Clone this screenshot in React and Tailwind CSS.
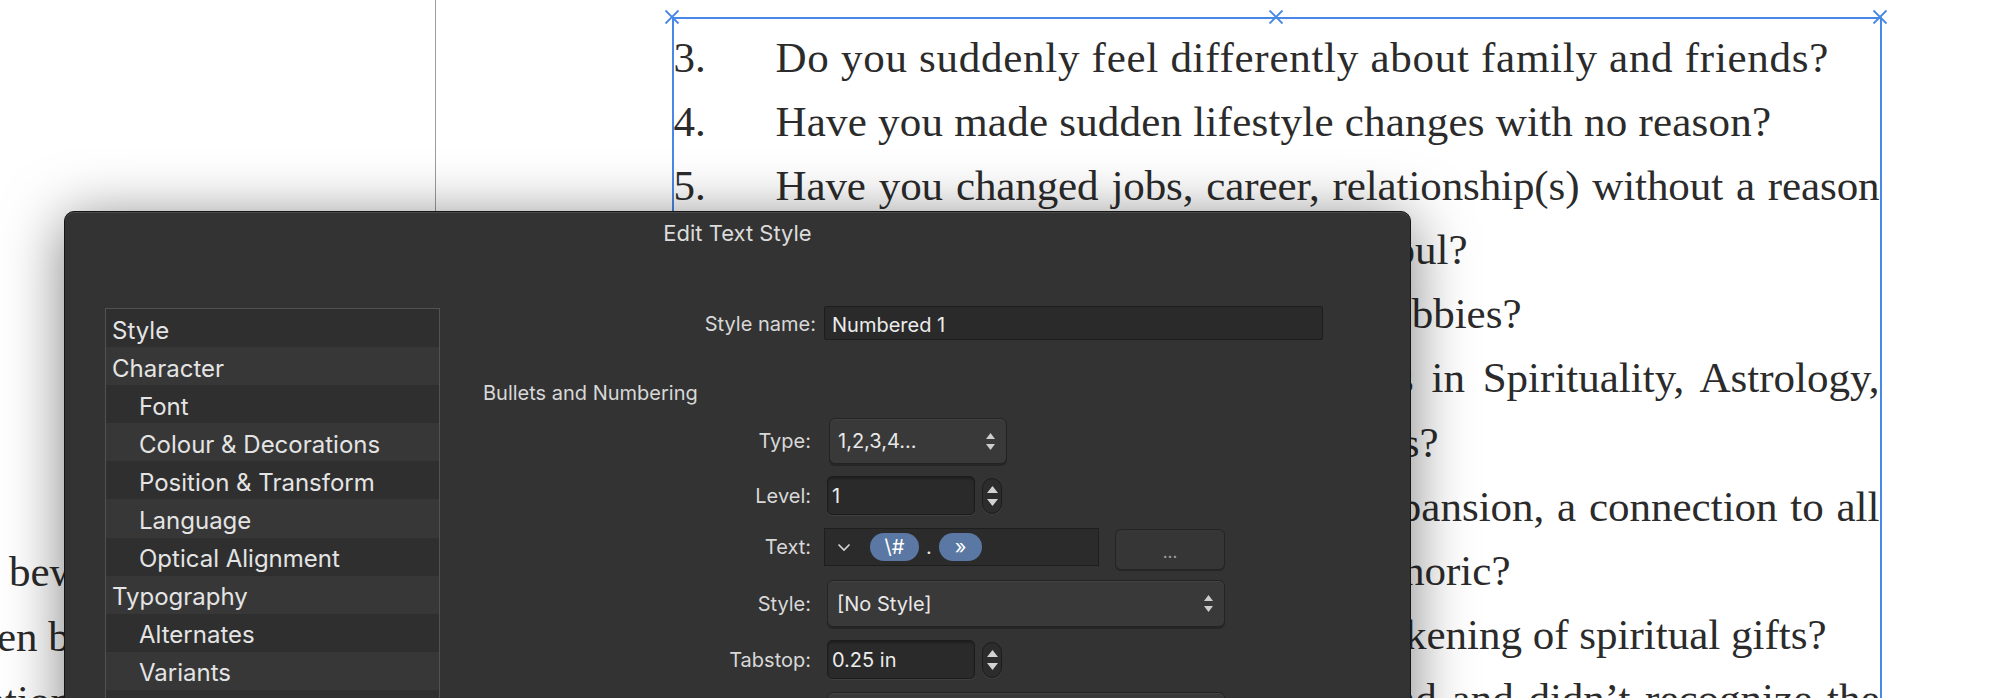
import React from "react";

const pageLines = [
  { n: "3.", t: "Do you suddenly feel differently about family and friends?", k: "left", tr: "tracking-[0.72px]" },
  { n: "4.", t: "Have you made sudden lifestyle changes with no reason?", k: "left", tr: "tracking-[0.22px]" },
  { n: "5.", t: "Have you changed jobs, career, relationship(s) without a reason", k: "just" },
  { n: "", t: "than it simply felt right to your soul?", k: "right", pr: "pr-[412px]" },
  { n: "6.", t: "Have you lost interest in old hobbies?", k: "right", pr: "pr-[358px]" },
  { n: "7.", t: "Do you have new interests in Spirituality, Astrology,", k: "right", pr: "pr-[0px] [word-spacing:7px]" },
  { n: "", t: "Tarot, Crystals or Energy modalities?", k: "right", pr: "pr-[441px]" },
  { n: "8.", t: "Do you feel a sense of oneness, expansion, a connection to all", k: "right", pr: "pr-[0px] [word-spacing:2px]" },
  { n: "", t: "that is, or feel unexplainably euphoric?", k: "right", pr: "pr-[369px]" },
  { n: "9.", t: "Have you experienced an awakening of spiritual gifts?", k: "right", pr: "pr-[53px]" },
  { n: "10.", t: "Have you felt a shift around and didn\u2019t recognize the", k: "right", pr: "pr-[0px] [word-spacing:4px]" },
];

const sideItems = [
  ["Style", 0],
  ["Character", 0],
  ["Font", 1],
  ["Colour & Decorations", 1],
  ["Position & Transform", 1],
  ["Language", 1],
  ["Optical Alignment", 1],
  ["Typography", 0],
  ["Alternates", 1],
  ["Variants", 1],
  ["Ligatures", 1],
];

function Handle({ className }) {
  return (
    <svg className={className} width="16" height="16" viewBox="0 0 16 16">
      <path d="M1.5 1.5L14.5 14.5M14.5 1.5L1.5 14.5" stroke="#4a88e8" strokeWidth="1.8" fill="none" />
    </svg>
  );
}

function Label({ children }) {
  return (
    <div className="w-[328px] shrink-0 text-right text-[20px] leading-[24px] text-[#d8d8d8]">{children}</div>
  );
}

function SelectArrows() {
  return (
    <div className="flex flex-col items-center gap-[5px]">
      <svg width="9" height="6" viewBox="0 0 9 6">
        <path d="M4.5 0L9 6H0Z" fill="#cdcdcd" />
      </svg>
      <svg width="9" height="6" viewBox="0 0 9 6">
        <path d="M0 0H9L4.5 6Z" fill="#cdcdcd" />
      </svg>
    </div>
  );
}

function Stepper() {
  return (
    <div className="ml-[7px] w-[20px] h-[36px] rounded-[10px] bg-[#2c2c2c] border border-[#1c1c1c] shadow-[0_1px_0_rgba(255,255,255,0.06)] flex flex-col items-center justify-center gap-[6px]">
      <svg width="11" height="7" viewBox="0 0 11 7">
        <path d="M5.5 0L11 7H0Z" fill="#d2d2d2" />
      </svg>
      <svg width="11" height="7" viewBox="0 0 11 7">
        <path d="M0 0H11L5.5 7Z" fill="#d2d2d2" />
      </svg>
    </div>
  );
}

function NumInput({ value }) {
  return (
    <div className="w-[148px] h-[39px] rounded-[5px] bg-[#2a2a2a] border border-[#1c1c1c] shadow-[inset_0_2px_2px_rgba(0,0,0,0.25),0_1px_0_rgba(255,255,255,0.06)] flex items-center pl-[4px] pt-[1px] text-[20px] text-[#ececec]">
      {value}
    </div>
  );
}

export default function App() {
  return (
    <div className="relative w-[2010px] h-[698px] overflow-hidden bg-white">
      {/* Document spread */}
      <div className="flex h-full font-['Liberation_Serif',serif] text-[43px] leading-[64.2px] text-[#2b2b2b]">
        {/* left page */}
        <div className="w-[436px] h-full shrink-0 border-r border-[#9c9c9c] overflow-hidden pt-[540.4px] whitespace-nowrap">
          <div className="pl-[9px]">bewildered</div>
          <div className="-ml-[3px]">en by</div>
          <div className="-ml-[14px]">ations</div>
        </div>
        {/* right page */}
        <div className="flex-1 pl-[235.5px] pt-[16.5px]">
          <div className="w-[1210px] h-[700px] border-t-2 border-x-2 border-[#4a88e8] pt-[7px]">
            {pageLines.map((l, i) => (
              <div key={i} className="flex h-[64.2px]">
                <div className="w-[102px] shrink-0">{l.n}</div>
                {l.k === "left" && <div className={"flex-1 min-w-0 whitespace-nowrap " + l.tr}>{l.t}</div>}
                {l.k === "just" && (
                  <div className="flex-1 min-w-0 text-justify [text-align-last:justify] tracking-[-0.1px]">{l.t}</div>
                )}
                {l.k === "right" && (
                  <div className={"flex-1 min-w-0 flex justify-end whitespace-nowrap " + l.pr}>
                    <span>{l.t}</span>
                  </div>
                )}
              </div>
            ))}
          </div>
        </div>
      </div>

      {/* frame handles */}
      <Handle className="absolute left-[664px] top-[9px]" />
      <Handle className="absolute left-[1268px] top-[9px]" />
      <Handle className="absolute left-[1872px] top-[9px]" />

      {/* Dialog */}
      <div className="absolute left-[64px] top-[211px] w-[1347px] h-[560px] rounded-[10px] bg-[#333333] border border-[#161616] shadow-[inset_0_1px_0_#4a4a4a,0_8px_60px_rgba(0,0,0,0.5)] font-['Inter',sans-serif]">
        <div className="pt-[8px] text-center text-[22px] leading-[26px] text-[#dcdcdc]">Edit Text Style</div>

        <div className="flex items-start mt-[60px] pl-[40px]">
          {/* sidebar */}
          <div className="mt-[2px] w-[335px] shrink-0 border-[1.5px] border-[#525252] bg-[#2f2f2f]">
            {sideItems.map(([label, lvl], i) => (
              <div
                key={label}
                className={
                  "h-[38.1px] flex items-center pt-[5px] text-[24px] text-[#e4e4e4] " +
                  (i % 2 === 0 ? "bg-[#2f2f2f] " : "bg-[#373737] ") +
                  (lvl === 0 ? "pl-[6px]" : "pl-[33px]")
                }
              >
                {label}
              </div>
            ))}
          </div>

          {/* form */}
          <div className="ml-[43px] flex flex-col">
            <div className="flex items-center h-[34px]">
              <div className="w-[333px] shrink-0 text-right pt-[2px] text-[20px] leading-[24px] text-[#d8d8d8]">Style name:</div>
              <div className="ml-[8px] w-[499px] h-[34px] bg-[#2a2a2a] border border-[#1d1d1d] rounded-[2px] flex items-center pl-[7px] pt-[3px] text-[20px] text-[#ececec]">
                Numbered 1
              </div>
            </div>

            <div className="mt-[41px] text-[20px] leading-[24px] text-[#d8d8d8]">Bullets and Numbering</div>

            {/* Type */}
            <div className="mt-[13px] flex items-center h-[46px]">
              <Label>Type:</Label>
              <div className="ml-[18px] w-[178px] h-[46px] rounded-[6px] bg-[#393939] border border-[#232323] shadow-[0_2px_0_#262626,inset_0_1px_0_rgba(255,255,255,0.05)] flex items-center justify-between pl-[8px] pr-[11px] text-[20px] text-[#e8e8e8]">
                <span>1,2,3,4...</span>
                <SelectArrows />
              </div>
            </div>

            {/* Level */}
            <div className="mt-[12px] flex items-center h-[39px]">
              <Label>Level:</Label>
              <div className="ml-[16px] flex items-center">
                <NumInput value="1" />
                <Stepper />
              </div>
            </div>

            {/* Text */}
            <div className="mt-[13px] flex items-start h-[42px]">
              <div className="h-[38px] flex items-center">
                <Label>Text:</Label>
              </div>
              <div className="ml-[13px] w-[275px] h-[38px] bg-[#2b2b2b] border-[1.5px] border-[#1e1e1e] flex items-center">
                <svg className="ml-[12px]" width="14" height="9" viewBox="0 0 14 9">
                  <path d="M1.5 1.5L7 7L12.5 1.5" stroke="#d6d6d6" strokeWidth="1.6" fill="none" />
                </svg>
                <div className="ml-[19px] w-[49px] h-[28px] rounded-full bg-[#5a78a3] flex items-center justify-center text-[20px] text-white">
                  \#
                </div>
                <div className="w-[20px] text-center text-[20px] text-[#e6e6e6]">.</div>
                <div className="w-[43px] h-[28px] rounded-full bg-[#5a78a3] flex items-center justify-center text-[20px] text-white">
                  »
                </div>
              </div>
              <div className="ml-[16px] mt-[1px] w-[110px] h-[41px] rounded-[6px] bg-[#363636] border border-[#242424] shadow-[0_1px_0_#262626] flex items-end justify-center pb-[9px] text-[17px] leading-[16px] text-[#a0a0a0]">
                ...
              </div>
            </div>

            {/* Style */}
            <div className="mt-[10px] flex items-center h-[47px]">
              <Label>Style:</Label>
              <div className="ml-[16px] w-[398px] h-[47px] rounded-[6px] bg-[#393939] border border-[#232323] shadow-[0_2px_0_#262626,inset_0_1px_0_rgba(255,255,255,0.05)] flex items-center justify-between pl-[9px] pr-[11px] text-[20px] text-[#e8e8e8]">
                <span>[No Style]</span>
                <SelectArrows />
              </div>
            </div>

            {/* Tabstop */}
            <div className="mt-[13px] flex items-center h-[39px]">
              <Label>Tabstop:</Label>
              <div className="ml-[16px] flex items-center">
                <NumInput value="0.25 in" />
                <Stepper />
              </div>
            </div>

            {/* next (cut off) */}
            <div className="mt-[13px] flex items-center h-[47px]">
              <Label>Alignment:</Label>
              <div className="ml-[16px] w-[398px] h-[47px] rounded-[6px] bg-[#393939] border border-[#232323] shadow-[inset_0_1px_0_rgba(255,255,255,0.05)]" />
            </div>
          </div>
        </div>
      </div>
    </div>
  );
}
